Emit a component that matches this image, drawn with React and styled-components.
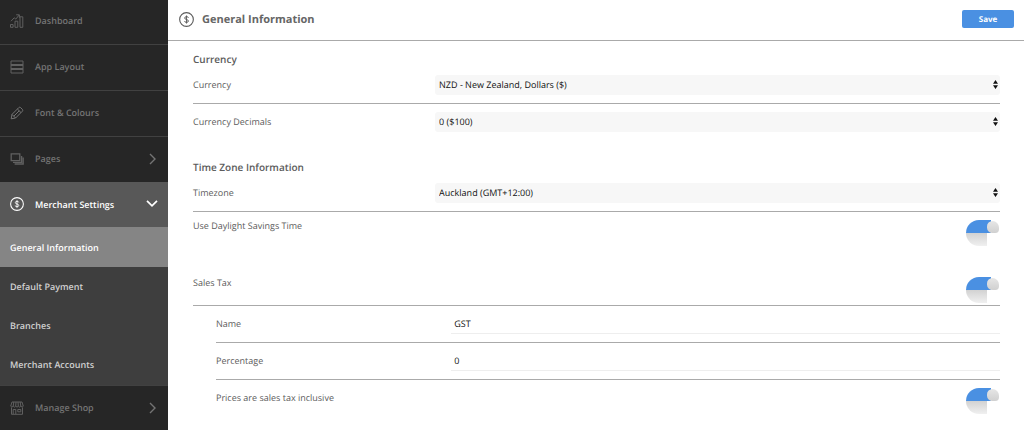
import React from "react";
import styled, { createGlobalStyle, css } from "styled-components";

const App = () => {
    return (
        <Page>
            <GlobalStyle />
            <Sidebar>
                <MenuItem href="#dashboard">
                    <DashboardIcon />
                    <MenuText>Dashboard</MenuText>
                </MenuItem>
                <MenuItem href="#layout">
                    <LayoutIcon />
                    <MenuText>App Layout</MenuText>
                </MenuItem>
                <MenuItem href="#fonts">
                    <PencilIcon />
                    <MenuText>Font &amp; Colours</MenuText>
                </MenuItem>
                <MenuItem href="#pages">
                    <PagesIcon />
                    <MenuText>Pages</MenuText>
                    <ChevronRight />
                </MenuItem>
                <MenuItem href="#merchant" $open>
                    <DollarIcon size={14} />
                    <MenuText>Merchant Settings</MenuText>
                    <ChevronDown />
                </MenuItem>
                <SubMenu>
                    <SubItem href="#general" $active>
                        General Information
                    </SubItem>
                    <SubItem href="#payment">Default Payment</SubItem>
                    <SubItem href="#branches">Branches</SubItem>
                    <SubItem href="#accounts">Merchant Accounts</SubItem>
                </SubMenu>
                <MenuItem href="#shop">
                    <ShopIcon />
                    <MenuText>Manage Shop</MenuText>
                    <ChevronRight />
                </MenuItem>
            </Sidebar>
            <Main>
                <Header>
                    <DollarIcon size={15} />
                    <PageTitle>General Information</PageTitle>
                    <SaveButton type="submit" form="settings">
                        Save
                    </SaveButton>
                </Header>
                <Form id="settings" onSubmit={(e) => e.preventDefault()}>
                    <Section>
                        <SectionTitle>Currency</SectionTitle>
                        <SelectRow id="currency" label="Currency" option="NZD - New Zealand, Dollars ($)" line />
                        <SelectRow id="decimals" label="Currency Decimals" option="0 ($100)" />
                    </Section>
                    <Section>
                        <SectionTitle>Time Zone Information</SectionTitle>
                        <SelectRow id="timezone" label="Timezone" option="Auckland (GMT+12:00)" line />
                        <Row $top>
                            <Label htmlFor="daylight">Use Daylight Savings Time</Label>
                            <Toggle id="daylight" defaultChecked />
                        </Row>
                    </Section>
                    <Section>
                        <Row $top $line>
                            <Label htmlFor="tax">Sales Tax</Label>
                            <Toggle id="tax" defaultChecked />
                        </Row>
                        <SubFields>
                            <Row $line>
                                <Label htmlFor="name">Name</Label>
                                <Input id="name" type="text" defaultValue="GST" />
                            </Row>
                            <Row $line>
                                <Label htmlFor="percentage">Percentage</Label>
                                <Input id="percentage" type="text" defaultValue="0" />
                            </Row>
                            <Row $top>
                                <Label htmlFor="inclusive">Prices are sales tax inclusive</Label>
                                <Toggle id="inclusive" defaultChecked />
                            </Row>
                        </SubFields>
                    </Section>
                </Form>
            </Main>
        </Page>
    );
};

const SelectRow = ({ id, label, option, line }) => (
    <Row $line={line}>
        <Label htmlFor={id}>{label}</Label>
        <SelectBox>
            <Select id={id}>
                <option>{option}</option>
            </Select>
            <Arrows width="5" height="9" viewBox="0 0 5 9" aria-hidden="true">
                <path d="M2.5 0L5 3.8H0zM2.5 9L0 5.2h5z" fill="#111" />
            </Arrows>
        </SelectBox>
    </Row>
);

const DashboardIcon = () => (
    <Icon width="14" height="14" viewBox="0 0 14 14">
        <path d="M.5 10.5h2.6v2.8H.5zM5 7.2h2.8v6.1H5zM10 2.8h2.8v10.5H10z" />
        <path d="M1 7.2L4.2 3.8l1.6 1.3L9.2 1M6.2.8h3.2v3" />
    </Icon>
);

const LayoutIcon = () => (
    <Icon width="14" height="14" viewBox="0 0 14 14">
        <path d="M1 1h12v12H1zM1 4.5h12M1 9.5h12M1 5.5h12M1 8.5h12" />
    </Icon>
);

const PencilIcon = () => (
    <Icon width="14" height="14" viewBox="0 0 14 14" $bright>
        <path d="M1.2 12.8l.8-4.4L8.8 1.6q.9-.8 1.8 0l1.8 1.8q.8.9 0 1.8L5.6 12zM2 8.4L5.6 12M7.4 3l3.6 3.6M3.8 10.2l5.4-5.4" />
    </Icon>
);

const PagesIcon = () => (
    <Icon width="14" height="14" viewBox="0 0 14 14">
        <path d="M1.2 1.8h8.6v6.8H1.2z" strokeWidth="1.3" />
        <path d="M3 10.4h8.6V4M4.6 12h8.6V5.6" strokeWidth="1.3" />
    </Icon>
);

const ShopIcon = () => (
    <Icon width="14" height="14" viewBox="0 0 14 14">
        <path d="M2 1h10l1.3 4.2q-1.2 1.8-2.5 0-1.2 1.8-2.5 0-1.2 1.8-2.6 0-1.2 1.8-2.5 0-1.3 1.8-2.5 0zM3.8 1l-.6 4.2M6 1l-.3 4.2M8 1l.3 4.2M10.2 1l.6 4.2" />
        <path d="M1.5 6.5v6.8h11V6.5M3.2 13V8.5h2.6V13M7.8 8.5h3v2.3h-3z" />
    </Icon>
);

const DollarIcon = ({ size }) => (
    <Icon width={size} height={size} viewBox="0 0 16 16" $bright>
        <circle cx="8" cy="8" r="7.3" strokeWidth="1.2" />
        <path d="M10 6.2Q9.8 4.9 8 4.9T6.1 6.4Q6.1 7.7 8 8t2 1.6q0 1.5-2 1.5T6 9.7M8 3.7v8.6" strokeWidth="1" />
    </Icon>
);

const ChevronRight = () => (
    <Icon width="12" height="12" viewBox="0 0 12 12" $bright>
        <path d="M4 1l5 5-5 5" strokeWidth="1.4" />
    </Icon>
);

const ChevronDown = () => (
    <Icon width="12" height="12" viewBox="0 0 12 12" $bright>
        <path d="M1 2.8l5 5 5-5" strokeWidth="1.7" />
    </Icon>
);

const GlobalStyle = createGlobalStyle`
    * {
        box-sizing: border-box;
    }

    body {
        margin: 0;
        background-color: white;
        font-family: "Open Sans", "Noto Sans", sans-serif;
        font-size: 9px;
        text-rendering: geometricPrecision;
        color: #5c5c5c;
    }

    input,
    select,
    button {
        font: inherit;
        text-rendering: inherit;
    }
`;

const Page = styled.div`
    display: flex;
    min-height: 100vh;
    overflow: hidden;
`;

const Sidebar = styled.nav`
    width: 168px;
    flex-shrink: 0;
    margin-top: -2px;
    background-color: #262626;
    font-weight: 600;
`;

const Icon = styled.svg`
    flex-shrink: 0;
    fill: none;
    stroke: currentColor;
    opacity: ${(props) => (props.$bright ? 1 : 0.75)};
`;

const MenuItem = styled.a`
    display: flex;
    align-items: center;
    height: 46px;
    padding: 0 10px 2px;
    border-top: 1px solid #414141;
    color: #747474;
    text-decoration: none;

    ${(props) =>
        props.$open &&
        css`
            height: 45px;
            border-top-color: #585858;
            background-color: #585858;
            color: white;
        `}
`;

const MenuText = styled.span`
    flex: 1;
    margin-left: 11px;
`;

const SubMenu = styled.div`
    padding-bottom: 1px;
    background-color: #3e3e3e;
`;

const SubItem = styled.a`
    display: flex;
    align-items: center;
    height: ${(props) => (props.$active ? "40px" : "39px")};
    padding: 0 10px;
    background-color: ${(props) => (props.$active ? "#858585" : "transparent")};
    color: ${(props) => (props.$active ? "white" : "#d0d0d0")};
    text-decoration: none;
`;

const Main = styled.main`
    flex: 1;
    min-width: 0;
`;

const Header = styled.header`
    display: flex;
    align-items: center;
    height: 41px;
    padding: 0 10px 2px 11px;
    border-bottom: 1px solid #aaa;
`;

const PageTitle = styled.h1`
    flex: 1;
    margin: 0 0 0 8px;
    font-size: 11px;
    font-weight: 700;
    color: #666;
`;

const SaveButton = styled.button`
    width: 52px;
    height: 18px;
    padding: 0;
    border: none;
    border-radius: 2px;
    background-color: #4a90e2;
    color: white;
    font-size: 8px;
    font-weight: 700;
`;

const Form = styled.form`
    padding: 11px 24px 8px 25px;
`;

const Section = styled.section`
    margin-bottom: 19px;

    &:last-child {
        margin-top: 20px;
        margin-bottom: 0;
    }
`;

const SectionTitle = styled.h2`
    margin: 0;
    font-size: 10px;
    font-weight: 600;
    line-height: 15px;
`;

const Label = styled.label`
    line-height: 12px;
`;

const Row = styled.div`
    display: grid;
    grid-template-columns: 30% 70%;
    align-items: ${(props) => (props.$top ? "start" : "center")};
    min-height: 37px;
    padding-top: ${(props) => (props.$top ? "8px" : 0)};
    border-bottom: 1px solid ${(props) => (props.$line ? "#aaa" : "transparent")};
`;

const SelectBox = styled.div`
    position: relative;
    display: flex;
`;

const Select = styled.select`
    appearance: none;
    width: 100%;
    height: 20px;
    padding: 0 16px 1px 4px;
    border: none;
    border-radius: 3px;
    background-color: #f7f7f7;
    color: #111;
`;

const Arrows = styled.svg`
    position: absolute;
    top: 5px;
    right: 2px;
    pointer-events: none;
`;

const Input = styled.input`
    width: 100%;
    height: 20px;
    padding: 0 3px 1px;
    border: none;
    border-bottom: 1px solid #eee;
    background: none;
    color: #111;
`;

const Toggle = styled.input.attrs({ type: "checkbox" })`
    appearance: none;
    position: relative;
    justify-self: end;
    width: 34px;
    height: 26px;
    margin: 0;
    border-radius: 13px 0 0 13px;
    background: linear-gradient(#d2d2d2, #f0f0f0) left bottom / 21px 13px no-repeat;

    &::before,
    &::after {
        content: "";
        position: absolute;
    }

    &::before {
        top: 0;
        left: 0;
        width: 25px;
        height: 13px;
        border-radius: 13px 0 0 0;
        background-color: #ccc;
    }

    &:checked::before {
        background-color: #4a90e2;
    }

    &::after {
        top: 1px;
        left: 21px;
        width: 12px;
        height: 12px;
        border-radius: 6px 7px 4px 6px;
        background: linear-gradient(#e6e6e6, #d0d0d0);
    }
`;

const SubFields = styled.div`
    padding-left: 23px;

    ${Label} {
        line-height: 20px;
    }
`;

export default App;
